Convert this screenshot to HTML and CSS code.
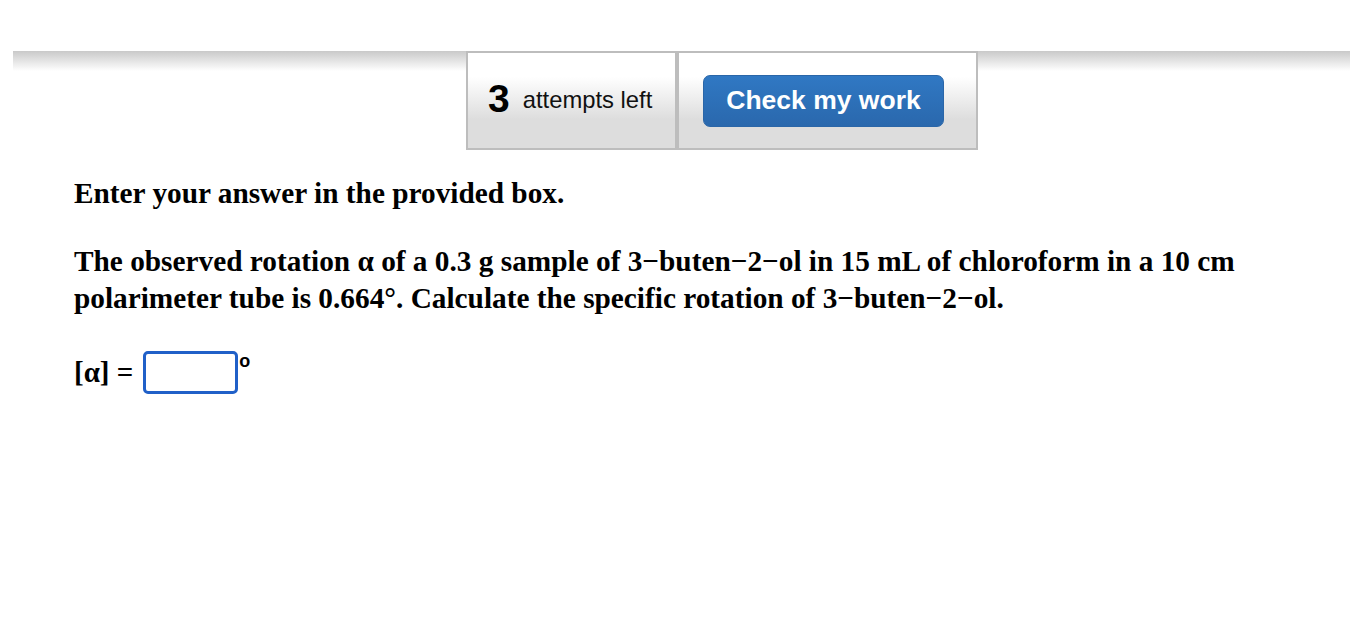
FILE: index.html
```html
<!DOCTYPE html>
<html>
<head>
<meta charset="utf-8">
<link rel="stylesheet" href="styles.css">
</head>
<body>
<div class="page">
  <div class="topbar">
    <div class="controls">
      <div class="cell attempts"><span class="num">3</span><span class="label">attempts left</span></div>
      <div class="cell check"><button class="btn">Check my work</button></div>
    </div>
  </div>
  <div class="content">
    <p class="instr">Enter your answer in the provided box.</p>
    <p class="question">The observed rotation α of a 0.3 g sample of 3−buten−2−ol in 15 mL of chloroform in a 10 cm polarimeter tube is 0.664°. Calculate the specific rotation of 3−buten−2−ol.</p>
    <div class="answer"><span class="lhs">[α] =</span><input class="box" type="text"><span class="deg">o</span></div>
  </div>
</div>
</body>
</html>
```
FILE: styles.css
```css
html, body { margin: 0; padding: 0; background: #fff; }
.page { padding-top: 51px; }
.topbar {
  margin-left: 13px;
  height: 20px;
  background: linear-gradient(#c9c9c9, #ffffff);
  position: relative;
}
.controls {
  position: absolute;
  left: 453px;
  top: 0;
  display: flex;
  height: 99px;
}
.cell {
  box-sizing: border-box;
  height: 99px;
  border: 2px solid #bdbdbd;
  background: linear-gradient(#ffffff 0%, #ffffff 25%, #dddddd 70%, #dddddd 100%);
  display: flex;
  align-items: center;
}
.attempts { width: 211px; padding-left: 20px; font-family: "Liberation Sans", Arial, sans-serif; }
.check { width: 301px; padding-left: 24px; }
.num { font-size: 39px; font-weight: bold; margin-right: 13px; line-height: 1; position: relative; top: -2px; }
.label { font-size: 23.8px; color: #111; position: relative; top: -1px; }
.btn {
  width: 241px;
  height: 52px;
  background: #2c6fb8;
  background: linear-gradient(#3078c3, #2a68ad);
  border: 1px solid #2a66a8;
  border-radius: 7px;
  color: #fff;
  font-family: "Liberation Sans", Arial, sans-serif;
  font-weight: bold;
  font-size: 26.5px;
  padding: 0;
  margin-top: 0;
}
.content {
  padding-left: 74px;
  padding-top: 104px;
  width: 1220px;
  font-family: "Liberation Serif", "Times New Roman", serif;
  font-weight: bold;
  font-size: 29.3px;
  color: #000;
}
.instr { margin: 0; line-height: 37px; }
.question { margin: 31px 0 0 0; line-height: 37px; }
.answer { margin-top: 34px; display: flex; align-items: center; }
.lhs { font-size: 29px; margin-right: 10px; }
.box {
  box-sizing: border-box;
  width: 95px;
  height: 43px;
  border: 3px solid #2060c8;
  border-radius: 5px;
  margin: 0;
  padding: 0;
}
.deg {
  font-family: "Liberation Sans", Arial, sans-serif;
  font-weight: bold;
  font-size: 18px;
  align-self: flex-start;
  margin-left: 1px;
  margin-top: 0;
}
```
